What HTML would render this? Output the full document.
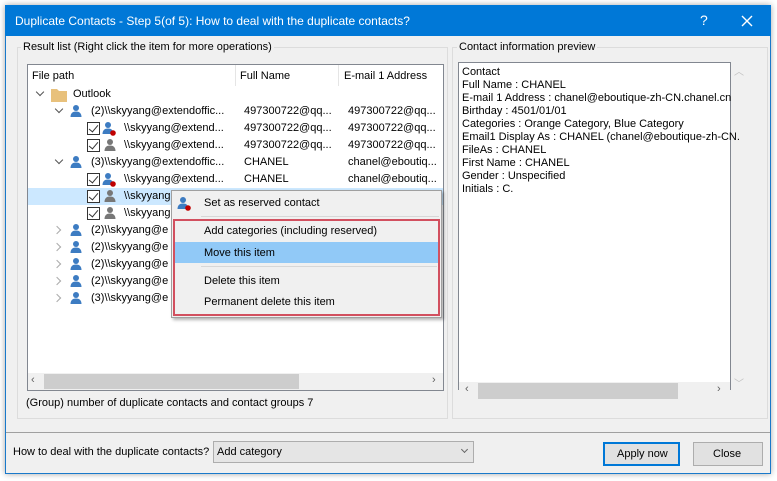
<!DOCTYPE html>
<html><head><meta charset="utf-8"><style>
*{margin:0;padding:0;box-sizing:border-box}
body{width:777px;height:481px;background:#fff;font-family:"Liberation Sans",sans-serif;font-size:11px;color:#000;position:relative;overflow:hidden}
.a{position:absolute;white-space:nowrap}
.win{position:absolute;left:5px;top:5px;width:766px;height:469px;background:#f0f0f0;border:1px solid #1979ca;box-shadow:0 0 6px rgba(0,0,0,.35)}
.title{position:absolute;left:5px;top:5px;width:766px;height:31px;background:#0078d7;color:#fff;font-size:12px}
.grp{position:absolute;border:1px solid #dcdcdc}
.lbl{position:absolute;background:#f0f0f0;padding:0 2px}
.box{position:absolute;background:#fff;border:1px solid #828790}
.chk{position:absolute;width:13px;height:13px;border:1px solid #333;background:#fff}
.chk:after{content:"";position:absolute;left:3px;top:0px;width:4px;height:8px;border:solid #333;border-width:0 1.3px 1.3px 0;transform:rotate(40deg)}
.arr{position:absolute;width:6px;height:6px;border:solid #555;border-width:0 1.3px 1.3px 0}
.dn{transform:rotate(45deg)}
.rt{transform:rotate(-45deg);border-color:#aaa}
</style></head><body>
<div class="win"></div>
<div class="title"><span class="a" style="left:10px;top:9px">Duplicate Contacts - Step 5(of 5): How to deal with the duplicate contacts?</span>
<span class="a" style="left:695px;top:7px;font-size:14px">?</span>
<svg class="a" style="left:736px;top:10px" width="12" height="12"><path d="M1 1L11 11M11 1L1 11" stroke="#fff" stroke-width="1.4"/></svg></div>

<div class="grp" style="left:17px;top:47px;width:431px;height:372px"></div>
<div class="lbl a" style="left:21px;top:41px">Result list (Right click the item for more operations)</div>
<div class="box" style="left:27px;top:64px;width:417px;height:327px"></div>
<div class="a" style="left:28px;top:65px;width:415px;height:21px;background:#fff"></div>
<div class="a" style="left:235px;top:65px;width:1px;height:21px;background:#e5e5e5"></div>
<div class="a" style="left:338px;top:65px;width:1px;height:21px;background:#e5e5e5"></div>
<span class="a" style="left:32px;top:70px">File path</span>
<span class="a" style="left:240px;top:70px">Full Name</span>
<span class="a" style="left:344px;top:70px">E-mail 1 Address</span>
<div class="a" style="left:28px;top:188px;width:415px;height:17px;background:#cce8ff"></div>

<svg class="a" style="left:0;top:0" width="450" height="400">
<defs>
<g id="pb"><circle cx="6" cy="4" r="3" fill="#3d7cc2"/><path d="M0.5 13c0-4 2.5-5.5 5.5-5.5s5.5 1.5 5.5 5.5z" fill="#3d7cc2"/></g>
<g id="pg"><circle cx="6" cy="4" r="3" fill="#777"/><path d="M0.5 13c0-4 2.5-5.5 5.5-5.5s5.5 1.5 5.5 5.5z" fill="#777"/></g>
<g id="pr"><use href="#pb"/><circle cx="11" cy="12" r="2.8" fill="#c00000"/></g>
</defs>
<path d="M51 89h6l2 2h8v11h-16z" fill="#e8c17c"/>
<use href="#pb" x="70" y="104"/>
<use href="#pr" x="102" y="121"/>
<use href="#pg" x="104" y="138"/>
<use href="#pb" x="70" y="155"/>
<use href="#pr" x="102" y="172"/>
<use href="#pg" x="104" y="189"/>
<use href="#pg" x="104" y="206"/>
<use href="#pb" x="70" y="223"/>
<use href="#pb" x="70" y="240"/>
<use href="#pb" x="70" y="257"/>
<use href="#pb" x="70" y="274"/>
<use href="#pb" x="70" y="291"/>
</svg>
<div class="arr dn" style="left:37px;top:89px"></div>
<div class="arr dn" style="left:56px;top:106px"></div>
<div class="arr dn" style="left:56px;top:157px"></div>
<div class="arr rt" style="left:54px;top:227px"></div>
<div class="arr rt" style="left:54px;top:244px"></div>
<div class="arr rt" style="left:54px;top:261px"></div>
<div class="arr rt" style="left:54px;top:278px"></div>
<div class="arr rt" style="left:54px;top:295px"></div>
<div class="chk" style="left:87px;top:122px"></div>
<div class="chk" style="left:87px;top:139px"></div>
<div class="chk" style="left:87px;top:173px"></div>
<div class="chk" style="left:87px;top:190px"></div>
<div class="chk" style="left:87px;top:207px"></div>

<span class="a" style="left:73px;top:88px">Outlook</span>
<span class="a" style="left:91px;top:105px">(2)\\skyyang@extendoffic...</span><span class="a" style="left:244px;top:105px">497300722@qq...</span><span class="a" style="left:348px;top:105px">497300722@qq...</span>
<span class="a" style="left:124px;top:122px">\\skyyang@extend...</span><span class="a" style="left:244px;top:122px">497300722@qq...</span><span class="a" style="left:348px;top:122px">497300722@qq...</span>
<span class="a" style="left:124px;top:139px">\\skyyang@extend...</span><span class="a" style="left:244px;top:139px">497300722@qq...</span><span class="a" style="left:348px;top:139px">497300722@qq...</span>
<span class="a" style="left:91px;top:156px">(3)\\skyyang@extendoffic...</span><span class="a" style="left:244px;top:156px">CHANEL</span><span class="a" style="left:348px;top:156px">chanel@eboutiq...</span>
<span class="a" style="left:124px;top:173px">\\skyyang@extend...</span><span class="a" style="left:244px;top:173px">CHANEL</span><span class="a" style="left:348px;top:173px">chanel@eboutiq...</span>
<span class="a" style="left:124px;top:190px">\\skyyang</span>
<span class="a" style="left:124px;top:207px">\\skyyang</span>
<span class="a" style="left:91px;top:224px">(2)\\skyyang@e</span>
<span class="a" style="left:91px;top:241px">(2)\\skyyang@e</span>
<span class="a" style="left:91px;top:258px">(2)\\skyyang@e</span>
<span class="a" style="left:91px;top:275px">(2)\\skyyang@e</span>
<span class="a" style="left:91px;top:292px">(3)\\skyyang@e</span>

<div class="a" style="left:28px;top:373px;width:415px;height:17px;background:#f0f0f0"></div>
<div class="a" style="left:44px;top:374px;width:255px;height:15px;background:#cdcdcd"></div>
<span class="a" style="left:31px;top:374px;color:#606060">‹</span><span class="a" style="left:432px;top:374px;color:#606060">›</span>
<span class="a" style="left:26px;top:397px">(Group) number of duplicate contacts and contact groups 7</span>

<div class="grp" style="left:452px;top:47px;width:316px;height:372px"></div>
<div class="lbl a" style="left:457px;top:41px">Contact information preview</div>
<div class="box" style="left:458px;top:62px;width:273px;height:328px"></div>
<div class="a" style="left:462px;top:66px;line-height:13px">Contact<br>Full Name : CHANEL<br>E-mail 1 Address : chanel@eboutique-zh-CN.chanel.cn<br>Birthday : 4501/01/01<br>Categories : Orange Category, Blue Category<br>Email1 Display As : CHANEL (chanel@eboutique-zh-CN.<br>FileAs : CHANEL<br>First Name : CHANEL<br>Gender : Unspecified<br>Initials : C.</div>
<span class="a" style="left:734px;top:63px;color:#c0c0c0;font-size:10px">︿</span>
<span class="a" style="left:734px;top:375px;color:#c0c0c0;font-size:10px">﹀</span>
<div class="a" style="left:459px;top:382px;width:271px;height:18px;background:#f0f0f0"></div>
<div class="a" style="left:478px;top:383px;width:200px;height:16px;background:#cdcdcd"></div>
<span class="a" style="left:465px;top:383px;color:#606060">‹</span><span class="a" style="left:717px;top:383px;color:#606060">›</span>

<div class="a" style="left:6px;top:432px;width:764px;height:1px;background:#a0a0a0"></div>
<span class="a" style="left:13px;top:446px">How to deal with the duplicate contacts?</span>
<div class="a" style="left:213px;top:441px;width:261px;height:22px;background:#e5e5e5;border:1px solid #adadad"></div>
<span class="a" style="left:217px;top:446px">Add category</span>
<div class="arr dn" style="left:462px;top:447px;width:5px;height:5px;border-color:#666;border-width:0 1px 1px 0"></div>
<div class="a" style="left:603px;top:442px;width:77px;height:24px;background:#e1e1e1;border:2px solid #0078d7"></div>
<span class="a" style="left:617px;top:448px">Apply now</span>
<div class="a" style="left:693px;top:442px;width:70px;height:24px;background:#e1e1e1;border:1px solid #adadad"></div>
<span class="a" style="left:713px;top:448px">Close</span>

<div class="a" style="left:171px;top:190px;width:271px;height:128px;background:#f0f0f0;border:1px solid #a0a0a0;box-shadow:2px 2px 3px rgba(0,0,0,.3)"></div>
<svg class="a" style="left:177px;top:196px" width="16" height="16"><use href="#pr"/></svg>
<span class="a" style="left:204px;top:197px">Set as reserved contact</span>
<div class="a" style="left:201px;top:216px;width:238px;height:1px;background:#d7d7d7"></div>
<div class="a" style="left:174px;top:242px;width:264px;height:21px;background:#91c9f7"></div>
<div class="a" style="left:173px;top:219px;width:267px;height:97px;border:2px solid #d2505f"></div>
<span class="a" style="left:204px;top:225px">Add categories (including reserved)</span>
<span class="a" style="left:204px;top:247px">Move this item</span>
<div class="a" style="left:201px;top:266px;width:236px;height:1px;background:#d7d7d7"></div>
<span class="a" style="left:204px;top:275px">Delete this item</span>
<span class="a" style="left:204px;top:296px">Permanent delete this item</span>
</body></html>
